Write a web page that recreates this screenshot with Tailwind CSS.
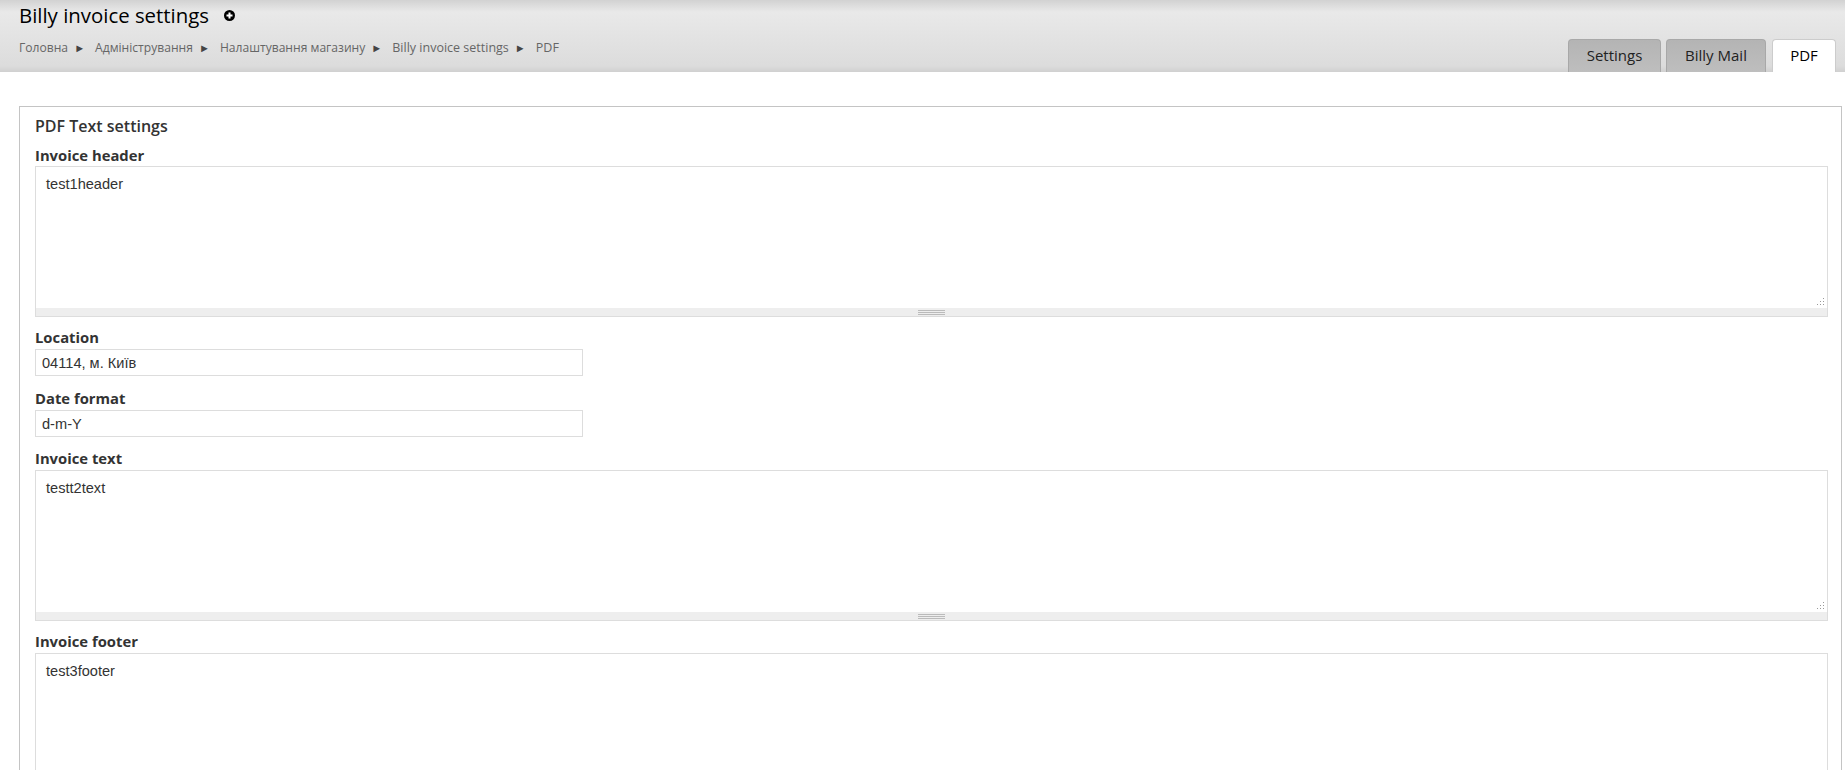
<!DOCTYPE html>
<html lang="uk">
<head>
    <meta charset="UTF-8">
    <title>Billy invoice settings</title>
    <script src="https://cdn.jsdelivr.net/npm/@tailwindcss/browser@4"></script>
</head>
<body class="h-[770px] overflow-hidden bg-white font-['Open_Sans',sans-serif] text-[#333]">
    <!-- header -->
    <header class="flex h-[72px] justify-between bg-[linear-gradient(#d2d2d2_0px,#e9e9e9_12px,#dcdcdc_66px,#d0d0d0_72px)] pl-[19px] pr-[9px]">
        <div>
            <h1 class="flex h-[31px] items-center text-[20.4px] text-black">
                Billy invoice settings
                <span class="ml-[15px] flex size-[11px] items-center justify-center rounded-full bg-black">
                    <svg class="size-[7px]" viewBox="0 0 7 7"><path d="M2.5 .5h2v2h2v2h-2v2h-2v-2h-2v-2h2z" fill="#fff"/></svg>
                </span>
            </h1>
            <nav class="mt-[8px] flex items-center text-[12.1px] leading-[18px] text-[#666]">
                <span>Головна</span><span class="flex w-[27px] justify-center pr-[4px] text-[11px] text-[#444]">►</span>
                <span>Адміністрування</span><span class="flex w-[27px] justify-center pr-[4px] text-[11px] text-[#444]">►</span>
                <span>Налаштування магазину</span><span class="flex w-[27px] justify-center pr-[4px] text-[11px] text-[#444]">►</span>
                <span class="text-[12.5px]">Billy invoice settings</span><span class="flex w-[27px] justify-center pr-[4px] text-[11px] text-[#444]">►</span>
                <span class="text-[12.5px]">PDF</span>
            </nav>
        </div>
        <ul class="flex items-end gap-[5px] text-[15px] text-[#222]">
            <li class="flex h-[33px] w-[93px] items-center justify-center rounded-t-[4px] border border-b-0 border-[#a8a8a8] bg-[linear-gradient(#b4b4b4,#bebebe)] pb-[2px]">Settings</li>
            <li class="flex h-[33px] w-[100px] items-center justify-center rounded-t-[4px] border border-b-0 border-[#a8a8a8] bg-[linear-gradient(#b4b4b4,#bebebe)] pb-[2px]">Billy Mail</li>
            <li class="ml-[1px] flex h-[33px] w-[64px] items-center justify-center rounded-t-[4px] border border-b-0 border-[#ccc] bg-white pb-[2px] text-black">PDF</li>
        </ul>
    </header>

    <main class="pt-[34px] pl-[19px] pr-[3px]">
        <fieldset class="border border-[#c4c4c4] pt-[7px] pr-[13px] pl-[15px]">
            <h2 class="mb-[7px] text-[16px] leading-[24px] font-semibold text-[#333]">PDF Text settings</h2>

            <label class="block text-[14.8px] leading-[20px] font-bold">Invoice header</label>
            <div class="mt-[1px] mb-[10px]">
                <div class="relative h-[142px] border-x border-t border-[#dddddd] px-[10px] py-[8px] font-['Liberation_Sans',sans-serif] text-[14.6px] leading-[18px]">
                    test1header
                    <svg class="absolute right-[2px] bottom-[2px] size-[8px]" viewBox="0 0 8 8"><path d="M6 0h1v1H6zM3 3h1v1H3zM6 3h1v1H6zM0 6h1v1H0zM3 6h1v1H3zM6 6h1v1H6z" fill="#999"/></svg>
                </div>
                <div class="flex h-[9px] justify-center border-x border-b border-[#dddddd] bg-[#eeeeee]">
                    <div class="mt-[2px] h-[5px] w-[27px] border-y border-[#bbb]"><div class="mt-[1px] h-px bg-[#bbb]"></div></div>
                </div>
            </div>

            <label class="block text-[14.8px] leading-[20px] font-bold">Location</label>
            <input class="mt-[2px] mb-[12px] block h-[27px] w-[548px] border border-[#dddddd] px-[6px] pt-[1px] font-['Liberation_Sans',sans-serif] text-[14.6px]" value="04114, м. Київ">

            <label class="block text-[14.8px] leading-[20px] font-bold">Date format</label>
            <input class="mt-[2px] mb-[11px] block h-[27px] w-[548px] border border-[#dddddd] px-[6px] pt-[1px] font-['Liberation_Sans',sans-serif] text-[14.6px]" value="d-m-Y">

            <label class="block text-[14.8px] leading-[20px] font-bold">Invoice text</label>
            <div class="mt-[2px] mb-[10px]">
                <div class="relative h-[142px] border-x border-t border-[#dddddd] px-[10px] py-[8px] font-['Liberation_Sans',sans-serif] text-[14.6px] leading-[18px]">
                    testt2text
                    <svg class="absolute right-[2px] bottom-[2px] size-[8px]" viewBox="0 0 8 8"><path d="M6 0h1v1H6zM3 3h1v1H3zM6 3h1v1H6zM0 6h1v1H0zM3 6h1v1H3zM6 6h1v1H6z" fill="#999"/></svg>
                </div>
                <div class="flex h-[9px] justify-center border-x border-b border-[#dddddd] bg-[#eeeeee]">
                    <div class="mt-[2px] h-[5px] w-[27px] border-y border-[#bbb]"><div class="mt-[1px] h-px bg-[#bbb]"></div></div>
                </div>
            </div>

            <label class="block text-[14.8px] leading-[20px] font-bold">Invoice footer</label>
            <div class="mt-[2px] h-[142px] border-x border-t border-[#dddddd] px-[10px] py-[8px] font-['Liberation_Sans',sans-serif] text-[14.6px] leading-[18px]">
                test3footer
            </div>
        </fieldset>
    </main>
</body>
</html>
